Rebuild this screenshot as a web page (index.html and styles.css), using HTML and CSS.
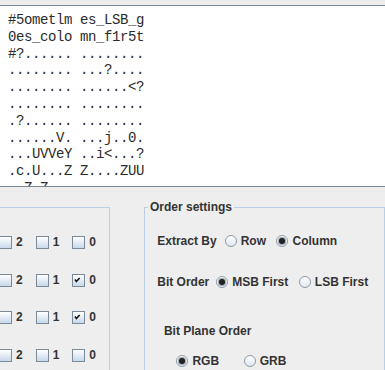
FILE: index.html
```html
<!DOCTYPE html>
<html lang="en">
<head>
  <meta charset="UTF-8">
  <title>Bit Plane Extract</title>
  <link rel="stylesheet" href="styles.css">
</head>
<body>

<div class="dump">
<pre class="dump-text">#5ometlm es_LSB_g
0es_colo mn_f1r5t
#?...... ........
........ ...?....
........ ......&lt;?
........ ........
.?...... ........
......V. ...j..0.
...UVVeY ..i&lt;...?
.c.U...Z Z....ZUU
..Z.Z... ........</pre>
</div>

<div class="settings">
  <!-- bit selection, one row per channel -->
  <div class="bits-panel">
    <div class="bit-grid">
      <label class="bit"><span class="check"></span>2</label>
      <label class="bit"><span class="check"></span>1</label>
      <label class="bit"><span class="check"></span>0</label>

      <label class="bit"><span class="check"></span>2</label>
      <label class="bit"><span class="check"></span>1</label>
      <label class="bit"><span class="check on"><svg viewBox="0 0 13 13"><polyline points="3.5,6.5 5.2,9 9,4.8"/></svg></span>0</label>

      <label class="bit"><span class="check"></span>2</label>
      <label class="bit"><span class="check"></span>1</label>
      <label class="bit"><span class="check on"><svg viewBox="0 0 13 13"><polyline points="3.5,6.5 5.2,9 9,4.8"/></svg></span>0</label>

      <label class="bit"><span class="check"></span>2</label>
      <label class="bit"><span class="check"></span>1</label>
      <label class="bit"><span class="check"></span>0</label>
    </div>
  </div>

  <fieldset class="order-panel">
    <legend>Order settings</legend>
    <div class="order-body">
      <div class="order-row extract-row">
        <span class="order-label">Extract By</span>
        <label class="opt first"><span class="radio"></span>Row</label>
        <label class="opt"><span class="radio on"></span>Column</label>
      </div>

      <div class="order-row bit-order-row">
        <span class="order-label">Bit Order</span>
        <label class="opt first"><span class="radio on"></span>MSB First</label>
        <label class="opt"><span class="radio"></span>LSB First</label>
      </div>

      <div class="plane-title">Bit Plane Order</div>

      <div class="order-row plane-row">
        <label class="opt"><span class="radio on"></span>RGB</label>
        <label class="opt wide"><span class="radio"></span>GRB</label>
      </div>
    </div>
  </fieldset>
</div>

</body>
</html>
```

FILE: styles.css
```css
html, body {
  overflow: hidden;
}

body {
  margin: 0;
  height: 370px;
  background: #eeeeee;
  font-family: 'Liberation Sans', Arial, sans-serif;
  font-size: 12px;
  font-weight: bold;
  color: #333333;
}

.dump {
  margin-top: 5px;
  height: 180px;
  background: #fff;
  border-top: 1px solid #7a8a99;
  border-bottom: 1px solid #7a8a99;
  overflow: hidden;
}

.dump-text {
  margin: 0;
  padding: 6px 8px;
  font-family: 'Liberation Mono', 'Courier New', monospace;
  font-size: 14px;
  font-weight: normal;
  letter-spacing: -0.4px;
  line-height: 16.8px;
  color: #2b2b2b;
}

.settings {
  display: flex;
  align-items: flex-start;
  height: 183px;
  overflow: hidden;
}

/* left panel, its left edge runs off screen */
.bits-panel {
  margin-left: -40px;
  margin-top: 20px;
  width: 150px;
  height: 163px;
  box-sizing: border-box;
  border: 1px solid #b8cfe5;
  border-bottom: none;
  padding: 28px 0 0 38px;
}

.bit-grid {
  display: grid;
  grid-template-columns: repeat(3, 36.67px);
  grid-auto-rows: 13px;
  row-gap: 24.7px;
}

.bit {
  display: flex;
  align-items: center;
  gap: 4px;
  line-height: 13px;
}

.check {
  width: 13px;
  height: 13px;
  box-sizing: border-box;
  border: 1px solid #7a8a99;
  background: linear-gradient(#ffffff, #c8d8ea);
  flex: none;
}

.check svg {
  display: block;
  width: 11px;
  height: 11px;
  margin: -1px 0 0 -1px;
  overflow: visible;
}

.check polyline {
  fill: none;
  stroke: #111;
  stroke-width: 1.8;
}

.order-panel {
  margin: 13px 0 0 34px;
  padding: 0;
  width: 300px;
  height: 170px;
  box-sizing: border-box;
  border: 1px solid #b8cfe5;
  border-bottom: none;
  min-width: 0;
}

.order-panel legend {
  margin-left: 3px;
  padding: 0 2px;
  line-height: 14px;
}

.order-body {
  padding: 19.7px 0 0 12.3px;
}

.order-row {
  display: flex;
  align-items: center;
  height: 14px;
  line-height: 14px;
}

.opt {
  display: flex;
  align-items: center;
  gap: 4px;
  margin-left: 10.5px;
}

.opt.first {
  margin-left: 8px;
}

.bit-order-row {
  margin-top: 27px;
}

.bit-order-row .opt.first {
  margin-left: 7px;
}

.plane-title {
  margin: 35.3px 0 0 6.7px;
  line-height: 14px;
}

.plane-row {
  margin-top: 15.7px;
  padding-left: 19.2px;
}

.plane-row .opt:first-child {
  margin-left: 0;
}

.plane-row .opt.wide {
  margin-left: 24.5px;
}

.radio {
  width: 12px;
  height: 12px;
  box-sizing: border-box;
  border: 1px solid #8e9aa6;
  border-radius: 50%;
  background: linear-gradient(#ffffff, #dfe8f1);
  display: flex;
  align-items: center;
  justify-content: center;
  flex: none;
}

.radio.on::after {
  content: "";
  width: 6px;
  height: 6px;
  border-radius: 50%;
  background: #222;
  box-shadow: 0 0 0 1px #9aa4ae;
}
```
